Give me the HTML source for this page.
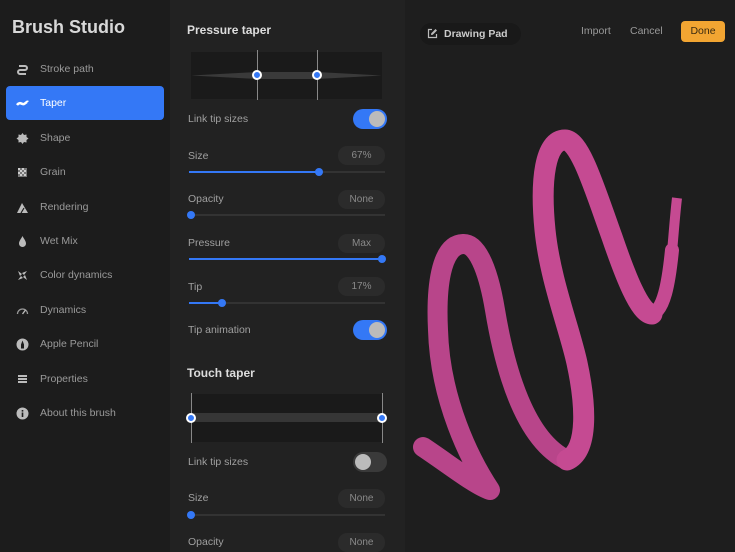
<!DOCTYPE html><html><head><style>
*{margin:0;padding:0;box-sizing:border-box}
body{width:735px;height:552px;overflow:hidden;background:#1e1e1e;font-family:"Liberation Sans",sans-serif;position:relative}
.a{position:absolute}
#side{left:0;top:0;width:170px;height:552px;background:#1c1c1c}
#mid{left:170px;top:0;width:235px;height:552px;background:#222}
.it{position:absolute;left:40px;font-size:10.5px;color:#9a9a9a;line-height:12px}
.ic{position:absolute;left:16px;width:13px;height:13px}
.lb{position:absolute;left:188px;font-size:10.5px;color:#a0a0a0;line-height:12px}
.pill{position:absolute;left:338px;width:47px;height:19px;border-radius:9px;background:#2b2b2b;color:#8a8a8a;font-size:10px;text-align:center;line-height:19px}
.tr{position:absolute;left:189px;width:196px;height:2px;background:#333}
.fi{position:absolute;left:189px;height:2px;background:#3478f6}
.dot{position:absolute;width:8px;height:8px;border-radius:50%;background:#3478f6;margin:-3px 0 0 -4px}
.tg{position:absolute;left:353px;width:34px;height:20px;border-radius:10px;background:#3478f6}
.tg i{position:absolute;top:2px;right:2px;width:16px;height:16px;border-radius:50%;background:#bbb}
.tg.off{background:#3a3a3a}.tg.off i{right:auto;left:2px}
.h{position:absolute;font-size:12px;font-weight:bold;color:#ddd}
.hd{position:absolute;width:10px;height:10px;border-radius:50%;background:#3478f6;border:2px solid #fff;margin:-5px 0 0 -5px}
.vl{position:absolute;width:1px;background:#888}
</style></head><body>
<div id="side" class="a">
<div class="a" style="left:12px;top:17px;font-size:18px;font-weight:bold;color:#d8d8d8">Brush Studio</div>
<div class="a" style="left:6px;top:86px;width:158px;height:34px;border-radius:4px;background:#3478f6"></div>
<svg class="ic" style="top:63px" viewBox="0 0 13 13"><path d="M3 3h6a2 2 0 0 1 0 4H4a2 2 0 0 0 0 4h6" stroke="#bbb" stroke-width="2" fill="none"/></svg>
<div class="it" style="top:63px">Stroke path</div>
<svg class="ic" style="top:97px" viewBox="0 0 13 13"><path d="M1 8c3-4 5 0 7-1s3-3 4-2" stroke="#fff" stroke-width="2.5" fill="none"/></svg>
<div class="it" style="top:97px;color:#fff">Taper</div>
<svg class="ic" style="top:132px" viewBox="0 0 13 13"><path d="M6.5 1l1.5 2 2.5-.5 0 2.5 2 1.5-2 1.5 0 2.5-2.5-.5-1.5 2-1.5-2-2.5.5 0-2.5-2-1.5 2-1.5 0-2.5 2.5.5z" fill="#bbb"/></svg>
<div class="it" style="top:132px">Shape</div>
<svg class="ic" style="top:166px" viewBox="0 0 13 13"><rect x="2" y="2" width="9" height="9" fill="#777"/><path d="M2 2h2v2H2zM6 2h2v2H6zM4 4h2v2H4zM8 4h2v2H8zM2 6h2v2H2zM6 6h2v2H6zM4 8h2v2H4zM8 8h2v2H8z" fill="#ccc"/></svg>
<div class="it" style="top:166px">Grain</div>
<svg class="ic" style="top:201px" viewBox="0 0 13 13"><path d="M1 12L6 2l6 10z" fill="#bbb"/><path d="M5 12l3-5" stroke="#1c1c1c" stroke-width="1.2"/></svg>
<div class="it" style="top:201px">Rendering</div>
<svg class="ic" style="top:235px" viewBox="0 0 13 13"><path d="M6.5 1C5 4 3 6 3 8.5a3.5 3.5 0 0 0 7 0C10 6 8 4 6.5 1z" fill="#bbb"/></svg>
<div class="it" style="top:235px">Wet Mix</div>
<svg class="ic" style="top:269px" viewBox="0 0 13 13"><path d="M2 2l4 3-2 2zM11 2L8 6 6 4zM11 11L7 8l2-2zM2 11l3-4 2 2z" fill="#bbb"/></svg>
<div class="it" style="top:269px">Color dynamics</div>
<svg class="ic" style="top:304px" viewBox="0 0 13 13"><path d="M1.5 10a5 5 0 0 1 10 0" stroke="#999" stroke-width="1.3" fill="none"/><path d="M6.5 10l3-4" stroke="#bbb" stroke-width="1.3"/></svg>
<div class="it" style="top:304px">Dynamics</div>
<svg class="ic" style="top:338px" viewBox="0 0 13 13"><circle cx="6.5" cy="6.5" r="6" fill="#bbb"/><path d="M6.5 2.5l1.5 4v4h-3v-4z" fill="#1c1c1c"/></svg>
<div class="it" style="top:338px">Apple Pencil</div>
<svg class="ic" style="top:373px" viewBox="0 0 13 13"><path d="M2 3h9M2 6h9M2 9h9" stroke="#bbb" stroke-width="2"/></svg>
<div class="it" style="top:373px">Properties</div>
<svg class="ic" style="top:407px" viewBox="0 0 13 13"><circle cx="6.5" cy="6.5" r="6" fill="#bbb"/><rect x="5.7" y="5.5" width="1.6" height="4.5" fill="#1c1c1c"/><rect x="5.7" y="3" width="1.6" height="1.6" fill="#1c1c1c"/></svg>
<div class="it" style="top:407px">About this brush</div>
</div>
<div id="mid" class="a"></div>
<div class="h" style="left:187px;top:23px">Pressure taper</div>
<div class="a" style="left:191px;top:52px;width:191px;height:47px;background:#1a1a1a"></div>
<svg class="a" style="left:191px;top:52px" width="191" height="47"><path d="M0 23.5L66 20H126L191 23.5L126 27H66z" fill="#3a3a3a"/></svg>
<div class="vl" style="left:257px;top:50px;height:50px"></div>
<div class="vl" style="left:317px;top:50px;height:50px"></div>
<div class="hd" style="left:257px;top:75px"></div><div class="hd" style="left:317px;top:75px"></div>
<div class="lb" style="top:113px">Link tip sizes</div><div class="tg" style="top:109px"><i></i></div>
<div class="lb" style="top:150px">Size</div><div class="pill" style="top:146px">67%</div>
<div class="tr" style="top:171px"></div><div class="fi" style="top:171px;width:130px"></div><div class="dot" style="left:319px;top:171px"></div>
<div class="lb" style="top:193px">Opacity</div><div class="pill" style="top:190px">None</div>
<div class="tr" style="top:214px"></div><div class="dot" style="left:191px;top:214px"></div>
<div class="lb" style="top:237px">Pressure</div><div class="pill" style="top:234px">Max</div>
<div class="tr" style="top:258px"></div><div class="fi" style="top:258px;width:193px"></div><div class="dot" style="left:382px;top:258px"></div>
<div class="lb" style="top:281px">Tip</div><div class="pill" style="top:277px">17%</div>
<div class="tr" style="top:302px"></div><div class="fi" style="top:302px;width:33px"></div><div class="dot" style="left:222px;top:302px"></div>
<div class="lb" style="top:324px">Tip animation</div><div class="tg" style="top:320px"><i></i></div>
<div class="h" style="left:187px;top:366px">Touch taper</div>
<div class="a" style="left:191px;top:394px;width:191px;height:48px;background:#1a1a1a"></div>
<div class="a" style="left:191px;top:413px;width:191px;height:9px;background:#363636"></div>
<div class="vl" style="left:191px;top:393px;height:50px"></div><div class="vl" style="left:382px;top:393px;height:50px"></div>
<div class="hd" style="left:191px;top:418px"></div><div class="hd" style="left:382px;top:418px"></div>
<div class="lb" style="top:456px">Link tip sizes</div><div class="tg off" style="top:452px"><i></i></div>
<div class="lb" style="top:492px">Size</div><div class="pill" style="top:489px">None</div>
<div class="tr" style="top:514px"></div><div class="dot" style="left:191px;top:514px"></div>
<div class="lb" style="top:536px">Opacity</div><div class="pill" style="top:533px">None</div>
<div class="a" style="left:420px;top:23px;width:101px;height:22px;border-radius:11px;background:#191919"></div>
<svg class="a" style="left:427px;top:28px" width="11" height="11" viewBox="0 0 11 11"><path d="M5 1.5H1.5v8h8V6" stroke="#bbb" stroke-width="1.2" fill="none"/><path d="M4 7l.3-1.8L8.5 1l1.5 1.5-4.2 4.2z" fill="#bbb"/></svg>
<div class="a" style="left:444px;top:28px;font-size:10.5px;font-weight:bold;color:#ccc">Drawing Pad</div>
<div class="a" style="left:581px;top:25px;font-size:10.5px;color:#999">Import</div>
<div class="a" style="left:630px;top:25px;font-size:10.5px;color:#999">Cancel</div>
<div class="a" style="left:681px;top:21px;width:44px;height:21px;border-radius:4px;background:#f2a532;color:#3a2a10;font-size:10.5px;text-align:center;line-height:21px">Done</div>
<svg class="a" style="left:0;top:0" width="735" height="552"><g fill="none" stroke-linejoin="round" stroke-linecap="round">
<path d="M423,447 C450,465 475,485 490,490 C470,460 440,400 438,330 C436,290 440,245 463,244 C480,243 490,280 495,310 C505,370 525,440 567,460" stroke="#b8458a" stroke-width="20"/>
<path d="M567,460 C590,450 585,400 577,363 C570,330 550,280 545,230 C540,180 545,140 565,140 C580,140 595,190 612,237 C625,275 640,314 652,314" stroke="#c54a92" stroke-width="21"/>
<path d="M650,314 C664,314 669,280 672,250" stroke="#c54a92" stroke-width="14"/>
<path d="M672,252 C674,230 675,215 677,198" stroke="#c54a92" stroke-width="10" stroke-linecap="butt"/>
</g></svg>
</body></html>
